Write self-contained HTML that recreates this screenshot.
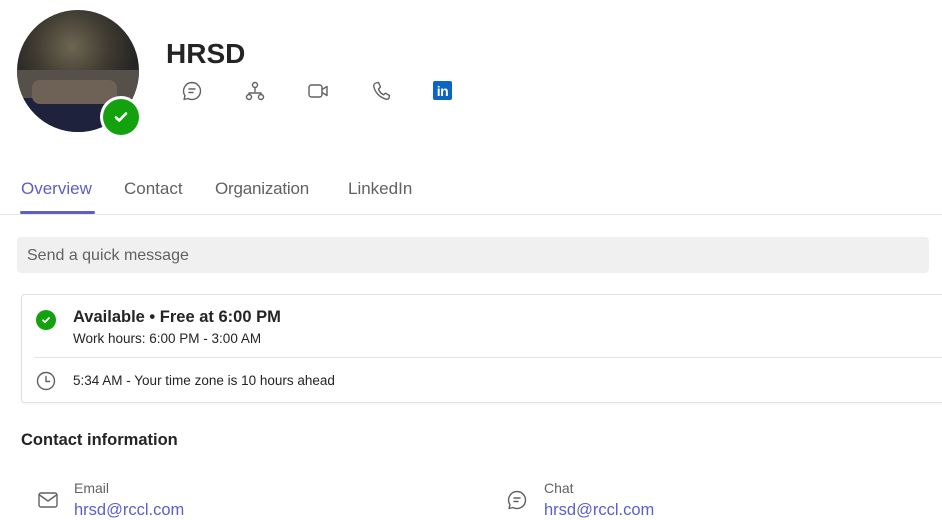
<!DOCTYPE html>
<html><head><meta charset="utf-8"><style>
*{margin:0;padding:0;box-sizing:border-box}
body{width:942px;height:520px;background:#fff;font-family:"Segoe UI","Liberation Sans",sans-serif;color:#242424;position:relative;overflow:hidden}
.a{position:absolute}
.ic{position:absolute;stroke:#616161;fill:none;stroke-width:1.4;stroke-linecap:round;stroke-linejoin:round}
</style></head><body>
<div class="a" style="left:17px;top:10px;width:122px;height:122px;border-radius:50%;overflow:hidden;background:radial-gradient(circle at 45% 30%,#6f6552 0%,#3e3a30 35%,#252525 60%,#1f2338 100%)">
 <div class="a" style="left:0;top:60px;width:122px;height:28px;background:#555049"></div>
 <div class="a" style="left:0;top:88px;width:122px;height:34px;background:#1e223c"></div>
 <div class="a" style="left:15px;top:70px;width:85px;height:24px;background:#6e6256;border-radius:8px"></div>
</div>
<div class="a" style="left:100px;top:96px;width:42px;height:42px;border-radius:50%;background:#fff"></div>
<div class="a" style="left:103px;top:99px;width:36px;height:36px;border-radius:50%;background:#13a10e"></div>
<svg class="a" style="left:112px;top:108px" width="18" height="18" viewBox="0 0 18 18"><path d="M4 9.5l3.2 3L14 5.5" stroke="#fff" stroke-width="2.6" fill="none" stroke-linecap="round" stroke-linejoin="round"/></svg>
<div class="a" style="left:166px;top:36px;font-size:28px;font-weight:700;line-height:36px">HRSD</div>
<svg class="ic" style="left:181px;top:80px" width="22" height="22" viewBox="0 0 22 22"><path d="M11 2.5a8.5 8.5 0 1 1-4 16l-4 1 1-3.8A8.5 8.5 0 0 1 11 2.5z"/><path d="M8 9h6M8 12.5h4"/></svg>
<svg class="ic" style="left:244px;top:80px" width="22" height="22" viewBox="0 0 22 22"><circle cx="11" cy="5" r="2.5"/><circle cx="5" cy="17" r="2.5"/><circle cx="17" cy="17" r="2.5"/><path d="M11 7.5v4M5 14.5v-1.5h12v1.5"/></svg>
<svg class="ic" style="left:307px;top:80px" width="24" height="22" viewBox="0 0 24 22"><rect x="2" y="5" width="13" height="12" rx="2.5"/><path d="M15 9.5l5-3v9l-5-3"/></svg>
<svg class="ic" style="left:370px;top:80px" width="22" height="22" viewBox="0 0 22 22"><path d="M6 3l2.5-.5 2 4.5-2 2c.8 2.5 2.5 4.5 5 5.8l2-1.6 4 2.3-.5 2.5c-.5 1-2 1.5-3 1.2C10 17.5 5 12.5 3.8 6.5 3.5 5 4.5 3.5 6 3z"/></svg>
<div class="a" style="left:433px;top:81px;width:19px;height:19px;background:#0a66c2;border-radius:2px;color:#fff;font-weight:700;font-size:14px;line-height:20px;text-align:center;font-family:'Liberation Sans',sans-serif;letter-spacing:-0.5px">in</div>
<div class="a" style="top:179px;left:21px;font-size:17px;color:#5b5fc7">Overview</div>
<div class="a" style="top:179px;left:124px;font-size:17px;color:#616161">Contact</div>
<div class="a" style="top:179px;left:215px;font-size:17px;color:#616161;letter-spacing:-0.2px">Organization</div>
<div class="a" style="top:179px;left:348px;font-size:17px;color:#616161">LinkedIn</div>
<div class="a" style="left:20px;top:211px;width:75px;height:3px;background:#5b5fc7;border-radius:2px"></div>
<div class="a" style="left:0;top:214px;width:942px;height:1px;background:#e6e6e6"></div>
<div class="a" style="left:17px;top:237px;width:912px;height:36px;background:#f0f0f0;border-radius:4px;font-size:16px;color:#616161;padding:10px 10px;line-height:18px">Send a quick message</div>
<div class="a" style="left:21px;top:294px;width:930px;height:109px;border:1px solid #e0e0e0;border-radius:4px;box-shadow:0 1px 2px rgba(0,0,0,.06)"></div>
<div class="a" style="left:36px;top:310px;width:20px;height:20px;border-radius:50%;background:#13a10e"></div>
<svg class="a" style="left:40px;top:314px" width="12" height="12" viewBox="0 0 12 12"><path d="M3 6.3l2 1.8L9 4" stroke="#fff" stroke-width="1.8" fill="none" stroke-linecap="round"/></svg>
<div class="a" style="left:73px;top:307px;font-size:16.5px;font-weight:600;line-height:20px">Available • Free at 6:00 PM</div>
<div class="a" style="left:73px;top:330px;font-size:13.5px;line-height:18px">Work hours: 6:00 PM - 3:00 AM</div>
<div class="a" style="left:34px;top:357px;width:908px;height:1px;background:#e6e6e6"></div>
<svg class="ic" style="left:35px;top:370px" width="22" height="22" viewBox="0 0 22 22"><circle cx="11" cy="11" r="8.5"/><path d="M11 6.5V11.5h3.5"/></svg>
<div class="a" style="left:73px;top:372px;font-size:13.5px;line-height:18px">5:34 AM - Your time zone is 10 hours ahead</div>
<div class="a" style="left:21px;top:430px;font-size:16.5px;font-weight:700;line-height:20px">Contact information</div>
<svg class="ic" style="left:37px;top:490px" width="22" height="20" viewBox="0 0 22 20"><rect x="2" y="3" width="18" height="14" rx="2"/><path d="M2.5 5l8.5 6 8.5-6"/></svg>
<div class="a" style="left:74px;top:480px;font-size:14px;color:#616161;line-height:17px">Email</div>
<div class="a" style="left:74px;top:500px;font-size:16.5px;color:#5b5fc7;line-height:20px">hrsd@rccl.com</div>
<svg class="ic" style="left:506px;top:489px" width="22" height="22" viewBox="0 0 22 22"><path d="M11 2.5a8.5 8.5 0 1 1-4 16l-4 1 1-3.8A8.5 8.5 0 0 1 11 2.5z"/><path d="M8 9h6M8 12.5h4"/></svg>
<div class="a" style="left:544px;top:480px;font-size:14px;color:#616161;line-height:17px">Chat</div>
<div class="a" style="left:544px;top:500px;font-size:16.5px;color:#5b5fc7;line-height:20px">hrsd@rccl.com</div>
</body></html>
